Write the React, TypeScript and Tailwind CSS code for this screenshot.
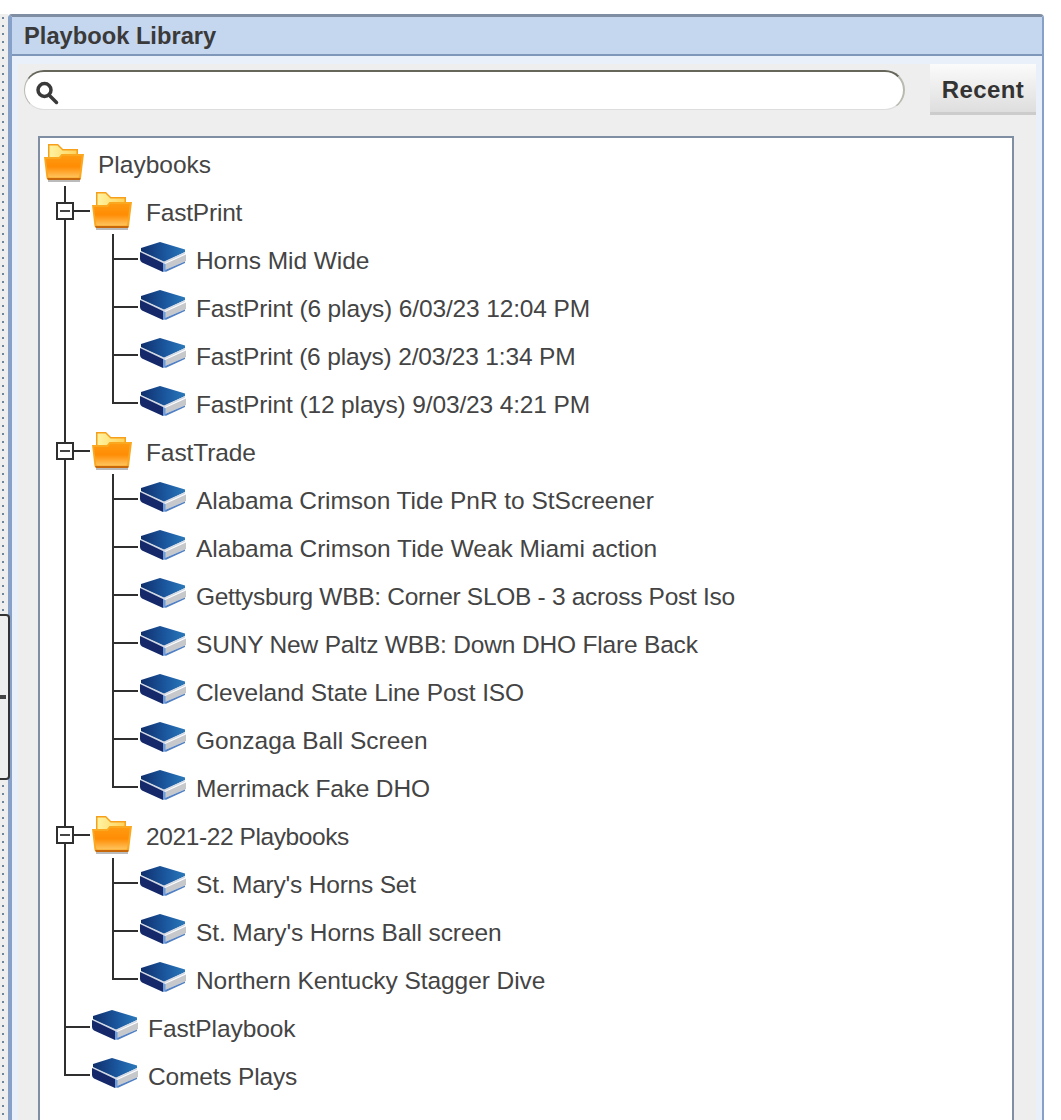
import { ReactNode } from "react"

type Item = { label: string; kind: "folder" | "book"; depth: number; box?: boolean; last?: boolean; fit?: string }

const items: Item[] = [
  { label: "Playbooks", kind: "folder", depth: 0 },
  { label: "FastPrint", kind: "folder", depth: 1, box: true, fit: "tracking-[-0.2px]" },
  { label: "Horns Mid Wide", kind: "book", depth: 2, fit: "tracking-[-0.07px]" },
  { label: "FastPrint (6 plays) 6/03/23 12:04 PM", kind: "book", depth: 2, fit: "tracking-[-0.14px]" },
  { label: "FastPrint (6 plays) 2/03/23 1:34 PM", kind: "book", depth: 2, fit: "tracking-[-0.17px]" },
  { label: "FastPrint (12 plays) 9/03/23 4:21 PM", kind: "book", depth: 2, last: true, fit: "tracking-[-0.14px]" },
  { label: "FastTrade", kind: "folder", depth: 1, box: true, fit: "tracking-[-0.1px]" },
  { label: "Alabama Crimson Tide PnR to StScreener", kind: "book", depth: 2, fit: "tracking-[-0.03px]" },
  { label: "Alabama Crimson Tide Weak Miami action", kind: "book", depth: 2 },
  { label: "Gettysburg WBB: Corner SLOB - 3 across Post Iso", kind: "book", depth: 2, fit: "tracking-[-0.3px]" },
  { label: "SUNY New Paltz WBB: Down DHO Flare Back", kind: "book", depth: 2, fit: "tracking-[-0.18px]" },
  { label: "Cleveland State Line Post ISO", kind: "book", depth: 2, fit: "tracking-[-0.1px]" },
  { label: "Gonzaga Ball Screen", kind: "book", depth: 2 },
  { label: "Merrimack Fake DHO", kind: "book", depth: 2, last: true, fit: "tracking-[-0.17px]" },
  { label: "2021-22 Playbooks", kind: "folder", depth: 1, box: true, fit: "tracking-[-0.4px]" },
  { label: "St. Mary's Horns Set", kind: "book", depth: 2, fit: "tracking-[-0.2px]" },
  { label: "St. Mary's Horns Ball screen", kind: "book", depth: 2, fit: "tracking-[-0.1px]" },
  { label: "Northern Kentucky Stagger Dive", kind: "book", depth: 2, last: true, fit: "tracking-[-0.07px]" },
  { label: "FastPlaybook", kind: "book", depth: 1, fit: "tracking-[-0.08px]" },
  { label: "Comets Plays", kind: "book", depth: 1, last: true, fit: "tracking-[-0.17px]" },
]

function FolderIcon({ id }: { id: string }) {
  return (
    <svg width="40" height="40" viewBox="0 0 40 40" className="shrink-0">
      <defs>
        <linearGradient id={`front-${id}`} x1="0" y1="0" x2="0" y2="1">
          <stop offset="0" stopColor="#ff9a10" />
          <stop offset="0.5" stopColor="#ff8c04" />
          <stop offset="1" stopColor="#ffc45e" />
        </linearGradient>
        <linearGradient id={`back-${id}`} x1="0" y1="0" x2="1" y2="0">
          <stop offset="0" stopColor="#fff3a0" />
          <stop offset="1" stopColor="#ffd35c" />
        </linearGradient>
      </defs>
      <path d="M4 36h32v3H4z" fill="#777" opacity="0.5" />
      <path d="M4 1h10l5 5h15v12H4z" fill="#f59f1a" />
      <path d="M5.500 2.500h8l5 5h14v10H5.500z" fill={`url(#back-${id})`} />
      <path d="M0 14h15l2.500-3H40l-3 24q-.2 2-2 2H5q-2 0-2.500-2z" fill="#f9a81f" />
      <path d="M2 16h13.800l2.500-3h19.400l-2.500 20q-.2 1.500-1.700 1.500H6q-1.500 0-1.800-1.500z" fill={`url(#front-${id})`} />
      <path d="M3 35h33.500l-.3 2H4z" fill="#c9680a" />
    </svg>
  )
}

function BookIcon({ id }: { id: string }) {
  return (
    <svg width="46" height="30" viewBox="0 0 46 30" className="shrink-0">
      <defs>
        <linearGradient id={`cover-${id}`} x1="0" y1="0.500" x2="1" y2="0.500">
          <stop offset="0" stopColor="#0f2f6c" />
          <stop offset="0.6" stopColor="#1c5aa2" />
          <stop offset="1" stopColor="#2a78ba" />
        </linearGradient>
      </defs>
      <path d="M20 0 45 7.500V10L24 20 1 9.500V6z" fill={`url(#cover-${id})`} />
      <path d="M1 9 24 19.500 45 10v1.800L24 21.500 1 11z" fill="#d4dae4" />
      <path d="M0 10 23 21v9L2 20.500Q0 19 0 17z" fill="#14286a" />
      <path d="M25 22 46 12.500V19L25 28z" fill="#c6c8cb" />
      <path d="M23 21 25.500 22v7.500L23 30z" fill="#6f9ddb" />
      <path d="M25 28 45 19.500v1.500L25.500 30z" fill="#4f7fc4" />
    </svg>
  )
}

function Guide({ kind, last }: { kind: "pass" | "tee" | "box"; last?: boolean }) {
  return (
    <div className="relative h-12 w-12 shrink-0">
      {kind === "pass" && <span className="absolute left-5 top-0 h-12 w-0.5 bg-[#2f2f2f]" />}
      {kind !== "pass" && <span className={last ? "absolute left-5 top-0 h-[23px] w-0.5 bg-[#2f2f2f]" : "absolute left-5 top-0 h-12 w-0.5 bg-[#2f2f2f]"} />}
      {kind !== "pass" && <span className="absolute left-[22px] top-[21px] h-0.5 w-[24px] bg-[#2f2f2f]" />}
      {kind === "box" && (
        <span className="absolute left-3 top-[13px] flex h-[18px] w-[18px] items-center justify-center border-2 border-[#2f2f2f] bg-white">
          <span className="h-0.5 w-2.5 bg-[#444]" />
        </span>
      )}
    </div>
  )
}

function Row({ item, index }: { item: Item; index: number }) {
  const guides: ReactNode[] = []
  if (item.depth === 1) {
    guides.push(<Guide key="a" kind={item.box ? "box" : "tee"} last={item.last} />)
  }
  if (item.depth === 2) {
    guides.push(<Guide key="a" kind="pass" />)
    guides.push(<Guide key="b" kind="tee" last={item.last} />)
  }
  return (
    <div className="relative flex h-12 items-center">
      {/* the lines start a little above the row, right under the parent's folder */}
      {item.depth === 0 && <span className="absolute left-5 top-[45px] h-[3px] w-0.5 bg-[#2f2f2f]" />}
      {item.box && <span className="absolute left-[68px] top-[45px] h-[3px] w-0.5 bg-[#2f2f2f]" />}
      {guides}
      {item.kind === "folder" ? (
        <div className="mb-1 flex w-[54px] shrink-0">
          <FolderIcon id={String(index)} />
        </div>
      ) : (
        <div className="mb-2 flex w-14 shrink-0">
          <BookIcon id={String(index)} />
        </div>
      )}
      <span className={`whitespace-nowrap text-[#444] ${item.fit ?? ""}`}>{item.label}</span>
    </div>
  )
}

function SearchIcon() {
  return (
    <svg width="24" height="24" viewBox="0 0 24 24" className="ml-2.5 mt-1 shrink-0">
      <circle cx="9.500" cy="9" r="6.500" fill="none" stroke="#3a3a3a" strokeWidth="3.500" />
      <path d="M14.500 14.500 21.500 21.500" stroke="#3a3a3a" strokeWidth="3.500" strokeLinecap="round" />
    </svg>
  )
}

export default function App() {
  return (
    <div className="flex h-[1120px] w-[1061px] overflow-hidden bg-white pt-3.5 font-['Liberation_Sans',Arial,sans-serif]">
      {/* dotted splitter on the left, with the collapse tab laid over it */}
      <div className="relative z-10 h-full w-2 shrink-0 bg-[#eeeeee] bg-[radial-gradient(circle,#6f8599_1px,transparent_1.2px)] bg-[length:8px_8px] bg-[position:-1px_0]">
        <div className="absolute left-0 top-[600px] h-[166px] w-2.5 rounded-r-sm border-y-2 border-r-2 border-[#333] bg-[#eeeeee]">
          <span className="absolute left-0 top-[79px] h-1 w-1.5 bg-[#444]" />
        </div>
      </div>

      <div className="flex h-full w-[1036px] shrink-0 flex-col rounded-t-sm border-b-0 border-l-4 border-r-2 border-t-[3px] border-l-[#87a0c8] border-r-[#87a0c8] border-t-[#7f8ea3]">
        <div className="flex h-[39px] shrink-0 items-center border-b-2 border-[#7f98ba] bg-[#c5d7ef] pl-3 pt-[3px] text-[23.700px] font-bold leading-none text-[#3a3a3a]">
          Playbook Library
        </div>
        <div className="flex min-h-0 flex-1 flex-col bg-[#e9f0fa] pl-1.5 pr-1.5 pt-2">
          <div className="flex min-h-0 flex-1 flex-col bg-[#eeeeee]">
            <div className="flex h-[51px] shrink-0 pl-1.5">
              <div className="mt-1.5 flex h-10 w-[881px] items-center rounded-full border-b border-l border-r-2 border-t-2 border-b-[#dddddd] border-l-[#b9b9b0] border-r-[#b9b9b0] border-t-[#66665a] bg-white">
                <SearchIcon />
              </div>
              <button className="ml-auto h-[51px] w-[106px] border-b-[3px] border-[#cccccc] bg-gradient-to-b from-[#fbfbfb] to-[#dedede] pt-1 text-[24px] font-bold tracking-[0.4px] text-[#333]">
                Recent
              </button>
            </div>
            <div className="ml-5 mr-[22px] mt-[21px] min-h-0 flex-1 border-l-2 border-r-2 border-t-2 border-[#7f8ea3] bg-white pl-1 pt-[3px] text-[24.500px] leading-none">
              {items.map((item, i) => (
                <Row key={i} item={item} index={i} />
              ))}
            </div>
          </div>
        </div>
      </div>
    </div>
  )
}
